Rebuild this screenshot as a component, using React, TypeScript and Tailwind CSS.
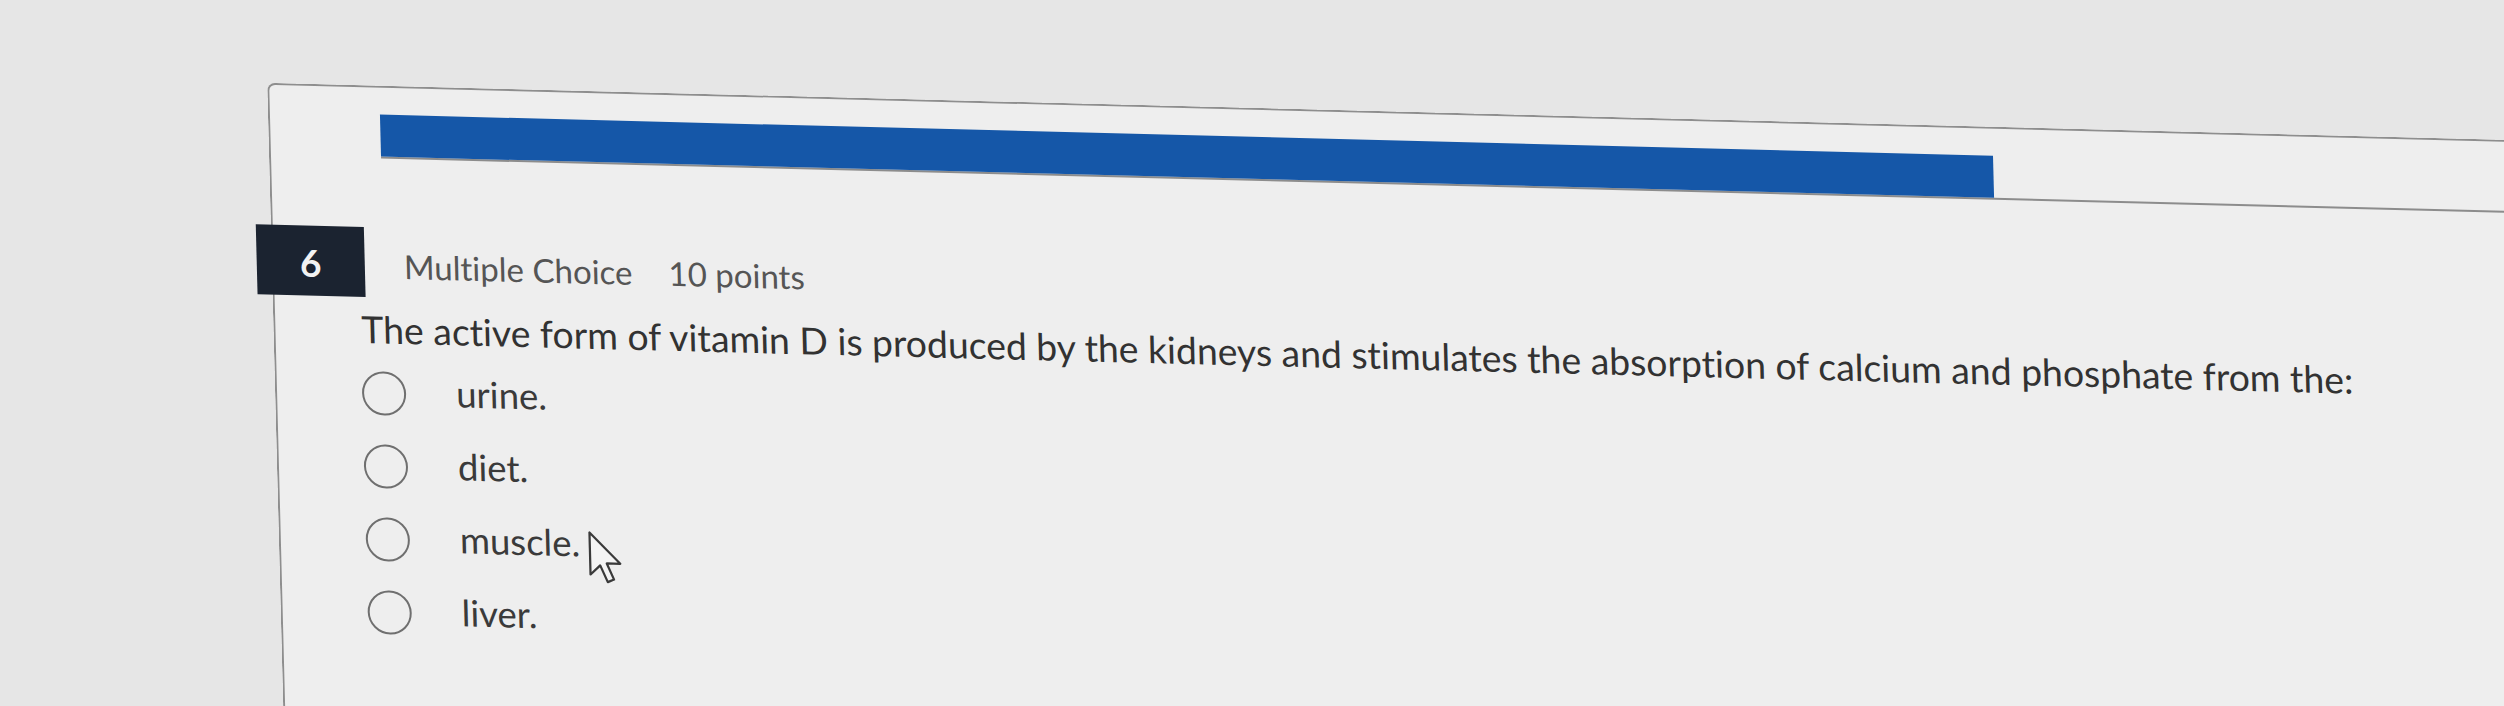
import React from "react";

const options = ["urine.", "diet.", "muscle.", "liver."];

function Cursor() {
  return (
    <svg
      width="36"
      height="54"
      viewBox="0 0 12 18"
      className="absolute left-[307px] top-[438px]"
    >
      <path
        d="M0.6 0.6 L0.6 14.6 L3.9 11.5 L6.3 17 L8.4 16.1 L6.1 10.8 L10.6 10.8 Z"
        fill="#f4f4f4"
        stroke="#3a3a3a"
        strokeWidth="0.75"
        strokeLinejoin="round"
      />
    </svg>
  );
}

export default function App() {
  return (
    <div className="relative h-[706px] w-[2504px] overflow-hidden bg-[#e6e6e6] font-['Lato','Liberation_Sans',sans-serif] [font-variant-ligatures:none]">
      <div className="origin-top-left skew-x-[1.47deg] skew-y-[1.46deg] pl-[265px] pt-[76px]">
        <div className="relative h-[760px] w-[2500px] rounded-tl-[8px] border-l-2 border-t-2 border-[#8e8e8e] bg-[#eeeeee]">
          {/* progress header */}
          <div className="ml-[110px] mt-[27px] h-[44px] border-b-2 border-[#8c8c8c]">
            <div className="h-[42px] w-[1612px] bg-[#1557a8]" />
          </div>

          {/* question header */}
          <div className="-ml-[17px] mt-[69px] flex items-start">
            <div className="flex h-[70px] w-[108px] items-center justify-center bg-[#1b2330] pt-[2px] text-[37px] font-bold leading-none text-[#f2f2f2]">
              6
            </div>
            <div className="ml-[39px] mt-[22px] flex items-start text-[33px] leading-none text-[#555555]">
              <span>Multiple Choice</span>
              <span className="ml-[36px]">10 points</span>
            </div>
          </div>

          {/* question text */}
          <div className="ml-[86px] mt-[13px] whitespace-nowrap text-[37.3px] leading-none text-[#323232]">
            The active form of vitamin D is produced by the kidneys and stimulates the absorption of calcium and phosphate from the:
          </div>

          {/* options */}
          <div className="ml-[85px] mt-[26px] flex flex-col">
            {options.map((o) => (
              <div key={o} className="flex h-[73px] items-start">
                <div className="-mt-[2px] h-[44px] w-[44px] shrink-0 rounded-full border-2 border-[#6f6f6f]" />
                <span className="ml-[50px] text-[36.5px] leading-none text-[#3a3a3a]">{o}</span>
              </div>
            ))}
          </div>

          <Cursor />
        </div>
      </div>
    </div>
  );
}
